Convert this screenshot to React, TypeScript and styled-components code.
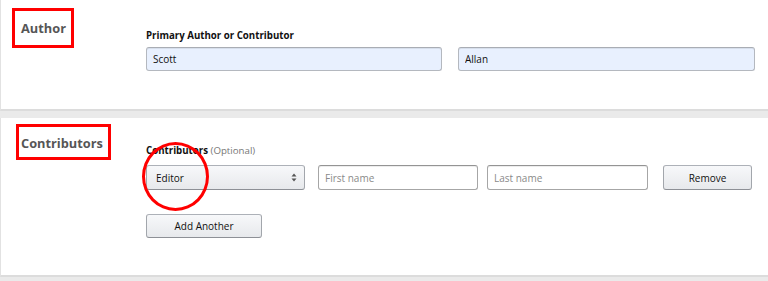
import React from "react";
import styled, { createGlobalStyle } from "styled-components";

const GlobalStyle = createGlobalStyle`
  html, body {
    margin: 0;
    padding: 0;
    background: #eaeaea;
    font-family: "Open Sans", "Liberation Sans", Arial, sans-serif;
  }
`;

const App: React.FC = () => {
  return (
    <Page>
      <GlobalStyle />
      <Card $bottom={38}>
        <Side $top={8}>
          <Marked $pad="7px 5px 7px 6px">Author</Marked>
        </Side>
        <Main $top={29}>
          <Label>Primary Author or Contributor</Label>
          <Row>
            <TextInput $filled $width={296} defaultValue="Scott" />
            <TextInput $filled $width={297} defaultValue="Allan" />
          </Row>
        </Main>
      </Card>
      <Card $bottom={37}>
        <Side $top={6}>
          <Spacer $left={4} />
          <Marked $pad="6px 5px 4px 2px">Contributors</Marked>
        </Side>
        <Main $top={26}>
          <Label>
            Contributors <Optional>(Optional)</Optional>
          </Label>
          <Row $gap={13}>
            <Select>
              <span>Editor</span>
              <svg width="6" height="9" viewBox="0 0 6 9">
                <path d="M0.5 3.5 L3 0.5 L5.5 3.5 Z" fill="#555" />
                <path d="M0.5 5.5 L3 8.5 L5.5 5.5 Z" fill="#555" />
              </svg>
            </Select>
            <InlineGroup>
              <TextInput $width={160} placeholder="First name" />
              <TextInput $width={161} placeholder="Last name" />
            </InlineGroup>
            <Button $width={89}>Remove</Button>
          </Row>
          <Button $width={116} $height={24} $top={24}>
            Add Another
          </Button>
        </Main>
        <Circle />
      </Card>
    </Page>
  );
};

const Page = styled.div`
  width: 100%;
  min-height: 281px;
  background: #eaeaea;
  overflow: hidden;
`;

const Card = styled.section<{ $bottom: number }>`
  position: relative;
  display: flex;
  background: #ffffff;
  border-left: 1px solid #e2e2e2;
  border-bottom: 2px solid #dcdcdc;
  margin-bottom: 7px;
  padding-bottom: ${(p) => p.$bottom}px;
`;

const Side = styled.div<{ $top: number }>`
  width: 134px;
  flex-shrink: 0;
  padding-left: 11px;
  padding-top: ${(p) => p.$top}px;
  display: flex;
  align-items: flex-start;
`;

const Spacer = styled.span<{ $left: number }>`
  width: ${(p) => p.$left}px;
`;

const Marked = styled.h2<{ $pad: string }>`
  margin: 0;
  border: 3px solid #ff0000;
  padding: ${(p) => p.$pad};
  font-size: 12.8px;
  line-height: 20px;
  font-weight: 700;
  color: #565656;
`;

const Main = styled.div<{ $top: number }>`
  flex: 1;
  padding-top: ${(p) => p.$top}px;
  padding-right: 15px;
`;

const Label = styled.div`
  font-size: 9.7px;
  line-height: 14px;
  font-weight: 700;
  color: #111111;
  margin-bottom: 4px;
`;

const Optional = styled.span`
  font-weight: 400;
  color: #777777;
`;

const Row = styled.div<{ $gap?: number }>`
  display: flex;
  align-items: center;
  gap: ${(p) => p.$gap ?? 16}px;
  margin-top: ${(p) => (p.$gap ? 7 : 0)}px;
`;

const InlineGroup = styled.div`
  display: flex;
  gap: 9px;
  margin-right: 2px;
`;

const TextInput = styled.input<{ $filled?: boolean; $width: number }>`
  box-sizing: border-box;
  width: ${(p) => p.$width}px;
  height: ${(p) => (p.$filled ? 24 : 25)}px;
  padding: 0 6px;
  font-family: inherit;
  font-size: 10px;
  color: #111111;
  background: ${(p) => (p.$filled ? "#e8f0fe" : "#ffffff")};
  border: 1px solid ${(p) => (p.$filled ? "#b4b8bf" : "#a6a6a6")};
  border-top-color: ${(p) => (p.$filled ? "#a9adb4" : "#949494")};
  border-radius: 3px;
  box-shadow: 0 1px 0 rgba(0, 0, 0, 0.07) inset;
  outline: none;
  &::placeholder {
    color: #8a8a8a;
  }
`;

const Select = styled.div`
  box-sizing: border-box;
  width: 159px;
  height: 25px;
  display: flex;
  align-items: center;
  justify-content: space-between;
  padding: 0 7px 0 9px;
  font-size: 10px;
  color: #111111;
  background: linear-gradient(#f7f8fa, #e7e9ec);
  border: 1px solid #adb1b8;
  border-color: #adb1b8 #a2a6ac #8d9096;
  border-radius: 3px;
`;

const Button = styled.button<{ $width: number; $height?: number; $top?: number }>`
  box-sizing: border-box;
  display: block;
  width: ${(p) => p.$width}px;
  height: ${(p) => p.$height ?? 25}px;
  margin-top: ${(p) => p.$top ?? 0}px;
  padding: 0;
  font-family: inherit;
  font-size: 10px;
  color: #111111;
  background: linear-gradient(#f7f8fa, #e7e9ec);
  border: 1px solid #adb1b8;
  border-color: #adb1b8 #a2a6ac #8d9096;
  border-radius: 3px;
  cursor: pointer;
`;

const Circle = styled.div`
  position: absolute;
  left: 141px;
  top: 24px;
  width: 67px;
  height: 69px;
  box-sizing: border-box;
  border: 3px solid #ff0000;
  border-radius: 50%;
  pointer-events: none;
`;

export default App;
